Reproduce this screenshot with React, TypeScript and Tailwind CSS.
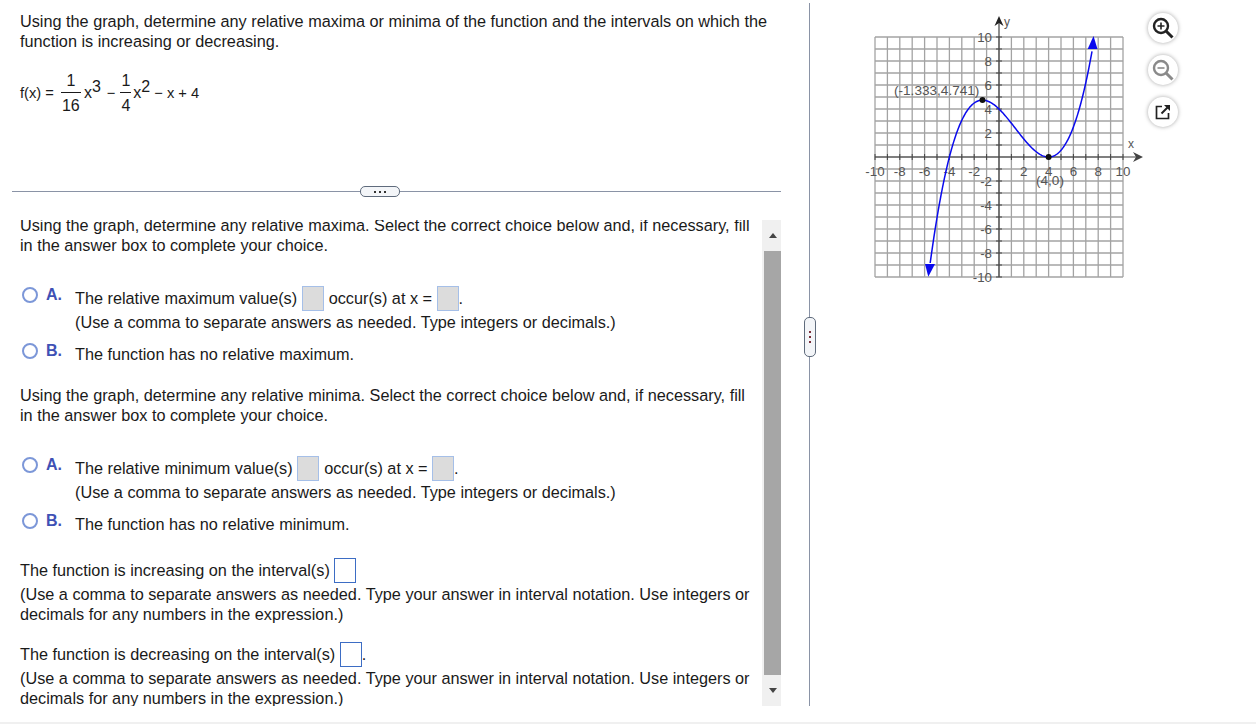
import React from 'react';

const f = (x: number) => (x * x * x) / 16 - (x * x) / 4 - x + 4;
const sx = (x: number) => 139 + x * 12.4;
const sy = (y: number) => 147 - y * 12;

const curve = () => {
  const pts: string[] = [];
  for (let x = -5.55; x <= 7.5; x += 0.05) {
    pts.push(`${sx(x).toFixed(2)},${sy(f(x)).toFixed(2)}`);
  }
  return 'M' + pts.join(' L');
};

const ticks = Array.from({ length: 21 }, (_, i) => i - 10);
const labels = [-10, -8, -6, -4, -2, 2, 4, 6, 8, 10];

const Graph = () => (
  <svg width="290" height="290" viewBox="0 0 290 290" className="block shrink-0">
    {ticks.map((t) => (
      <line key={`v${t}`} x1={sx(t)} x2={sx(t)} y1={sy(10)} y2={sy(-10)} stroke="#a3a3a3" strokeWidth="1.3" />
    ))}
    {ticks.map((t) => (
      <line key={`h${t}`} x1={sx(-10)} x2={sx(10)} y1={sy(t)} y2={sy(t)} stroke="#a3a3a3" strokeWidth="1.3" />
    ))}
    <line x1={sx(-10)} x2="276" y1={sy(0)} y2={sy(0)} stroke="#444" strokeWidth="1.2" />
    <line x1={sx(0)} x2={sx(0)} y1="13" y2={sy(-10)} stroke="#444" strokeWidth="1.2" />
    <path d="M283 147 L273 142 L276 147 L273 152 Z" fill="#444" />
    <path d="M139 6 L143.5 16 L139 13 L134.5 16 Z" fill="#222" />
    {ticks.filter((t) => t !== 0).map((t) => (
      <g key={`t${t}`}>
        <line x1={sx(t)} x2={sx(t)} y1={sy(0) - 3} y2={sy(0) + 3} stroke="#444" />
        <line x1={sx(0) - 3} x2={sx(0) + 3} y1={sy(t)} y2={sy(t)} stroke="#444" />
      </g>
    ))}
    <g fontFamily="'Liberation Sans', Arial, sans-serif" fontSize="13.33" fill="#555">
      {labels.map((t) => (
        <text key={`xl${t}`} x={sx(t)} y="166" textAnchor="middle">{t}</text>
      ))}
      {labels.map((t) => (
        <text key={`yl${t}`} x={sx(0) - 7} y={sy(t) + 5} textAnchor="end">{t}</text>
      ))}
      <text x="34" y="85" fontSize="13.6">(-1.333,4.741)</text>
      <text x="176" y="175" fontSize="13.6">(4,0)</text>
      <text x="144" y="16" fontSize="12">y</text>
      <text x="268" y="138" fontSize="12">x</text>
    </g>
    <path d={curve()} fill="none" stroke="#0a0aee" strokeWidth="1.5" />
    <path d="M233.5 26 L237.5 39 L227.7 39 Z" fill="#0a0aee" />
    <path d="M68.3 266.7 L65 254 L75 254 Z" fill="#0a0aee" />
    <circle cx={sx(-1.333)} cy={sy(4.741)} r="3" fill="#111" />
    <circle cx={sx(4)} cy={sy(0)} r="3" fill="#111" />
  </svg>
);

const Radio = ({ label }: { label: string }) => (
  <div className="flex items-center w-[75px] h-5 pl-[22px] shrink-0 -translate-y-[3px]">
    <span className="w-[16px] h-[16px] rounded-full border-2 border-[#7c97d8] bg-white shrink-0" />
    <span className="ml-2 font-bold text-[16px] text-[#3f51b5]">{label}</span>
  </div>
);

const GrayBox = () => (
  <span className="inline-block w-[22px] h-[25px] bg-[#dcdcdc] border border-[#a5bfe8] shrink-0" />
);

const WhiteBox = () => (
  <span className="inline-block w-[22px] h-[25px] bg-white border border-[#3d6dc4] shrink-0" />
);

const Choice = ({ kind }: { kind: string }) => (
  <div>
    <div className="flex">
      <Radio label="A." />
      <div>
        <div className="flex items-center h-5 whitespace-pre">
          The relative {kind} value(s) <GrayBox /><span className="ml-[5px]">occur(s) at x = </span><GrayBox />.
        </div>
        <div className="mt-1">(Use a comma to separate answers as needed. Type integers or decimals.)</div>
      </div>
    </div>
    <div className="flex mt-3">
      <Radio label="B." />
      <div>The function has no relative {kind}.</div>
    </div>
  </div>
);

const Interval = ({ word, dot }: { word: string; dot?: boolean }) => (
  <div>
    <div className="flex items-center h-5 whitespace-pre">
      The function is {word} on the interval(s) <WhiteBox />{dot ? '.' : ''}
    </div>
    <div className="mt-1 w-[735px]">
      (Use a comma to separate answers as needed. Type your answer in interval notation. Use integers or decimals for any numbers in the expression.)
    </div>
  </div>
);

const ToolButton = ({ children }: { children: React.ReactNode }) => (
  <div className="w-[30px] h-[30px] rounded-full bg-white shadow-[0_0_4px_rgba(0,0,0,0.35)] flex items-center justify-center">
    {children}
  </div>
);

export default function App() {
  return (
    <div className="w-[1256px] h-[724px] overflow-hidden bg-white text-[16.25px] leading-[20px] text-[#1a1a1a] font-['Liberation_Sans',Arial,sans-serif]">
      <div className="flex h-[722px]">
        <div className="w-[810px] h-[703px] mt-[3px] shrink-0 border-r border-[#8a93a6] relative flex flex-col">
          <div className="pl-5 pr-[30px] pt-[8px]">
            Using the graph, determine any relative maxima or minima of the function and the intervals on which the function is increasing or decreasing.
          </div>
          <div className="flex items-center pl-5 mt-[14px] h-[56px] text-[14.67px] whitespace-pre">
            <span>f(x) = </span>
            <span className="inline-flex flex-col items-center text-[16px] leading-[26px] ml-[3px]">
              <span className="-mb-[2px]">1</span>
              <span className="border-t border-[#1a1a1a] w-[20px] text-center">16</span>
            </span>
            <span className="ml-[3px] text-[16px]">x</span>
            <span className="text-[16px] -translate-y-[6px]">3</span>
            <span className="ml-[6px]">−</span>
            <span className="inline-flex flex-col items-center text-[16px] leading-[26px] ml-[5px]">
              <span className="-mb-[2px]">1</span>
              <span className="border-t border-[#1a1a1a] w-[11px] text-center">4</span>
            </span>
            <span className="ml-[2px] text-[16px]">x</span>
            <span className="text-[16px] -translate-y-[6px]">2</span>
            <span className="ml-[4px]">− x + 4</span>
          </div>
          <div className="relative mt-[70px] ml-3 mr-[28px] h-px bg-[#8a93a6]">
            <div className="absolute left-[348px] -top-[5px] w-10 h-[11px] rounded-[5px] border border-[#5f6b7c] bg-[#f3f5f8] flex items-center justify-center gap-[3px]">
              <span className="w-[2px] h-[2px] bg-[#333]" />
              <span className="w-[2px] h-[2px] bg-[#333]" />
              <span className="w-[2px] h-[2px] bg-[#333]" />
            </div>
          </div>
          <div className="flex mt-[28px] h-[486px] overflow-hidden">
            <div className="w-[762px] shrink-0 -mt-[5px]">
              <div className="pl-5 pr-[6px]">
                Using the graph, determine any relative maxima. Select the correct choice below and, if necessary, fill in the answer box to complete your choice.
              </div>
              <div className="mt-[33px]"><Choice kind="maximum" /></div>
              <div className="pl-5 pr-[6px] mt-[21px]">
                Using the graph, determine any relative minima. Select the correct choice below and, if necessary, fill in the answer box to complete your choice.
              </div>
              <div className="mt-[33px]"><Choice kind="minimum" /></div>
              <div className="pl-5 mt-[26px]"><Interval word="increasing" /></div>
              <div className="pl-5 mt-[20px]"><Interval word="decreasing" dot /></div>
            </div>
            <div className="w-[19px] bg-[#f0f0f0] flex flex-col items-end">
              <div className="h-[31px] w-full flex items-center justify-center pl-[2px]">
                <span className="w-0 h-0 border-x-[4px] border-x-transparent border-b-[5px] border-b-[#444]" />
              </div>
              <div className="w-[17px] h-[424px] bg-[#a6a6a6]" />
              <div className="flex-1 w-full flex items-center justify-center pl-[2px]">
                <span className="w-0 h-0 border-x-[4px] border-x-transparent border-t-[5px] border-t-[#444]" />
              </div>
            </div>
          </div>
          <div className="absolute -right-[7px] top-[314px] w-[12px] h-[40px] rounded-[5px] border border-[#5f6b7c] bg-[#f3f5f8] flex flex-col items-center justify-center gap-[3px]">
            <span className="w-[2px] h-[2px] bg-[#7a2f3a]" />
            <span className="w-[2px] h-[2px] bg-[#7a2f3a]" />
            <span className="w-[2px] h-[2px] bg-[#7a2f3a]" />
          </div>
        </div>
        <div className="flex-1 flex pl-[50px] pt-[10px]">
          <Graph />
          <div className="flex flex-col gap-[12px] -ml-[2px] pt-[3px]">
            <ToolButton>
              <svg width="24" height="24" viewBox="0 0 24 24" fill="none" stroke="#222" strokeWidth="2.4">
                <circle cx="10" cy="10" r="7" />
                <path d="M15 15 L21.5 21.5" strokeWidth="3" />
                <path d="M6.5 10 H13.5 M10 6.5 V13.5" strokeWidth="1.6" />
              </svg>
            </ToolButton>
            <ToolButton>
              <svg width="24" height="24" viewBox="0 0 24 24" fill="none" stroke="#8a8a8a" strokeWidth="2.4">
                <circle cx="10" cy="10" r="7" />
                <path d="M15 15 L21.5 21.5" strokeWidth="3" />
                <path d="M6.5 10 H13.5" strokeWidth="1.6" />
              </svg>
            </ToolButton>
            <ToolButton>
              <svg width="18" height="18" viewBox="0 0 18 18" fill="none">
                <path d="M8 3.5 H2.5 V15.5 H14.5 V10" stroke="#222" strokeWidth="1.7" />
                <path d="M7.5 10.5 L14 4" stroke="#222" strokeWidth="2" />
                <path d="M10 2 H16 V8 Z" fill="#222" />
              </svg>
            </ToolButton>
          </div>
        </div>
      </div>
      <div className="h-[2px] bg-[#f0f0f0]" />
    </div>
  );
}
